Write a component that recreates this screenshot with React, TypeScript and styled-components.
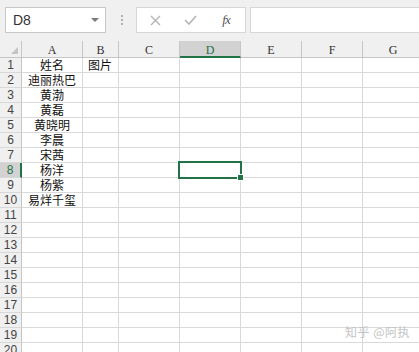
import React from 'react';
import styled, { createGlobalStyle } from 'styled-components';

const GlobalStyle = createGlobalStyle`
  html, body {
    margin: 0;
    padding: 0;
    overflow: hidden;
    background: #ffffff;
  }
  body {
    width: 419px;
    height: 352px;
    font-family: "Liberation Sans", "Noto Sans CJK SC", sans-serif;
  }
`;

const COLS = ['A', 'B', 'C', 'D', 'E', 'F', 'G'];
const COL_WIDTHS = [61, 36, 61, 61, 61, 61, 61];
const ROW_COUNT = 20;
const SELECTED = { col: 'D', row: 8 };

const names: Record<number, string> = {
  1: '姓名',
  2: '迪丽热巴',
  3: '黄渤',
  4: '黄磊',
  5: '黄晓明',
  6: '李晨',
  7: '宋茜',
  8: '杨洋',
  9: '杨紫',
  10: '易烊千玺',
};

const Page = styled.div`
  display: flex;
  flex-direction: column;
  width: 419px;
  height: 352px;
  background: #f0f0f0;
  overflow: hidden;
`;

const Toolbar = styled.div`
  display: flex;
  flex-shrink: 0;
  align-items: center;
  height: 41px;
  padding: 0 0 1px 5px;
  box-sizing: border-box;
  background: #f0f0f0;
`;

const NameBox = styled.div`
  display: flex;
  align-items: center;
  justify-content: space-between;
  width: 101px;
  height: 26px;
  box-sizing: border-box;
  padding: 0 6px 0 7px;
  background: #ffffff;
  border: 1px solid #c8c8c8;
  font-size: 14px;
  color: #333333;
`;

const Caret = styled.span`
  width: 0;
  height: 0;
  border-left: 4px solid transparent;
  border-right: 4px solid transparent;
  border-top: 4px solid #7a7a7a;
`;

const Grip = styled.div`
  display: flex;
  flex-direction: column;
  gap: 2px;
  margin: 0 13px 0 15px;
`;

const GripDot = styled.span`
  width: 2px;
  height: 2px;
  background: #b0b0b0;
`;

const FormulaButtons = styled.div`
  display: flex;
  align-items: center;
  width: 110px;
  height: 26px;
  box-sizing: border-box;
  background: #ffffff;
  border: 1px solid #d6d6d6;
  padding-left: 12px;
`;

const ToolIcon = styled.span<{ $w: number }>`
  display: flex;
  align-items: center;
  justify-content: center;
  width: ${(p) => p.$w}px;
  color: #b4b4b4;
`;

const Fx = styled.span`
  font-family: "Liberation Serif", serif;
  font-style: italic;
  font-size: 13px;
  color: #555555;
  letter-spacing: -1px;
`;

const FormulaInput = styled.div`
  flex: 1;
  height: 26px;
  margin-left: 4px;
  box-sizing: border-box;
  background: #ffffff;
  border: 1px solid #d6d6d6;
  border-right: none;
`;

const SheetWrap = styled.div`
  position: relative;
  flex: 1;
  min-height: 0;
  background: #ffffff;
`;

const Grid = styled.div`
  display: grid;
  grid-template-columns: 22px ${COL_WIDTHS.map((w) => `${w}px`).join(' ')};
  grid-template-rows: 17px;
  grid-auto-rows: 15px;
`;

const Corner = styled.div`
  position: relative;
  background: #f0f0f0;
  border-right: 1px solid #c6c6c6;
  border-bottom: 1px solid #c6c6c6;
  box-sizing: border-box;

  &::after {
    content: '';
    position: absolute;
    right: 3px;
    bottom: 3px;
    width: 0;
    height: 0;
    border-left: 7px solid transparent;
    border-bottom: 7px solid #c3c3c3;
  }
`;

const ColHeader = styled.div<{ $active?: boolean }>`
  display: flex;
  align-items: center;
  justify-content: center;
  box-sizing: border-box;
  background: ${(p) => (p.$active ? '#d2d2d2' : '#f0f0f0')};
  border-right: 1px solid #c6c6c6;
  border-bottom: ${(p) => (p.$active ? '2px solid #217346' : '1px solid #c6c6c6')};
  font-family: "Liberation Serif", "Noto Sans CJK SC", serif;
  font-size: 12px;
  line-height: 12px;
  color: ${(p) => (p.$active ? '#217346' : '#333333')};
  padding-top: ${(p) => (p.$active ? '3px' : '2px')};
`;

const RowHeader = styled.div<{ $active?: boolean }>`
  display: flex;
  align-items: center;
  justify-content: center;
  box-sizing: border-box;
  background: ${(p) => (p.$active ? '#d2d2d2' : '#f0f0f0')};
  border-right: ${(p) => (p.$active ? '2px solid #217346' : '1px solid #c6c6c6')};
  border-bottom: 1px solid #d8d8d8;
  font-size: 12px;
  line-height: 12px;
  color: ${(p) => (p.$active ? '#217346' : '#444444')};
`;

const Cell = styled.div<{ $align?: 'left' | 'center' }>`
  position: relative;
  display: flex;
  align-items: center;
  justify-content: ${(p) => (p.$align === 'left' ? 'flex-start' : 'center')};
  padding-left: ${(p) => (p.$align === 'left' ? '5px' : '0')};
  box-sizing: border-box;
  border-right: 1px solid #d9d9d9;
  border-bottom: 1px solid #d9d9d9;
  font-family: "Noto Sans CJK SC", sans-serif;
  font-size: 12px;
  line-height: 12px;
  color: #111111;
  white-space: nowrap;
`;

const Selection = styled.div`
  position: absolute;
  top: -2px;
  left: -2px;
  right: -2px;
  bottom: -2px;
  border: 2px solid #217346;
  z-index: 2;

  &::after {
    content: '';
    position: absolute;
    right: -4px;
    bottom: -4px;
    width: 5px;
    height: 5px;
    background: #217346;
    border: 1px solid #ffffff;
  }
`;

const Watermark = styled.div`
  position: absolute;
  right: 9px;
  bottom: 14px;
  font-family: "Noto Sans CJK SC", sans-serif;
  font-size: 12px;
  line-height: 12px;
  color: #c4c4c4;
  letter-spacing: 0.5px;
  z-index: 3;
`;

const CrossIcon = () => (
  <svg width="11" height="11" viewBox="0 0 11 11">
    <path d="M1 1 L10 10 M10 1 L1 10" stroke="currentColor" strokeWidth="1.4" fill="none" />
  </svg>
);

const CheckIcon = () => (
  <svg width="13" height="10" viewBox="0 0 13 10">
    <path d="M1 5 L5 9 L12 1" stroke="currentColor" strokeWidth="1.6" fill="none" />
  </svg>
);

const cellText = (col: string, row: number) => {
  if (col === 'A') return names[row] ?? '';
  if (col === 'B' && row === 1) return '图片';
  return '';
};

export default function App() {
  const rows = Array.from({ length: ROW_COUNT }, (_, i) => i + 1);

  return (
    <>
      <GlobalStyle />
      <Page>
        <Toolbar>
          <NameBox>
            <span>D8</span>
            <Caret />
          </NameBox>
          <Grip>
            <GripDot />
            <GripDot />
            <GripDot />
          </Grip>
          <FormulaButtons>
            <ToolIcon $w={12}>
              <CrossIcon />
            </ToolIcon>
            <ToolIcon $w={58}>
              <CheckIcon />
            </ToolIcon>
            <ToolIcon $w={14}>
              <Fx>fx</Fx>
            </ToolIcon>
          </FormulaButtons>
          <FormulaInput />
        </Toolbar>

        <SheetWrap>
          <Grid>
            <Corner />
            {COLS.map((c) => (
              <ColHeader key={c} $active={c === SELECTED.col}>
                {c}
              </ColHeader>
            ))}
            {rows.map((r) => (
              <React.Fragment key={r}>
                <RowHeader $active={r === SELECTED.row}>{r}</RowHeader>
                {COLS.map((c) => (
                  <Cell key={c} $align={c === 'B' ? 'left' : 'center'}>
                    {cellText(c, r)}
                    {c === SELECTED.col && r === SELECTED.row && <Selection />}
                  </Cell>
                ))}
              </React.Fragment>
            ))}
          </Grid>
          <Watermark>知乎 @阿执</Watermark>
        </SheetWrap>
      </Page>
    </>
  );
}
